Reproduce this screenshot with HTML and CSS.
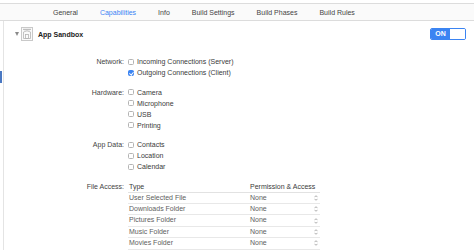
FILE: index.html
```html
<!DOCTYPE html>
<html lang="en">
<head>
  <meta charset="UTF-8">
  <title>Capabilities</title>
  <link rel="stylesheet" href="styles.css">
</head>
<body>
  <div class="tabs">
    <span>General</span>
    <span class="active">Capabilities</span>
    <span>Info</span>
    <span>Build Settings</span>
    <span>Build Phases</span>
    <span>Build Rules</span>
  </div>
  <div class="content">
    <div class="gutter"><div class="mark"></div></div>
    <div class="pane">
      <div class="section-head">
        <span class="disclosure"></span>
        <svg class="cap-icon" width="12" height="14" viewBox="0 0 12 14">
          <rect x="0.5" y="0.5" width="11" height="13" fill="#fafafa" stroke="#c9c9c9"/>
          <path d="M2.5 3 V2 H3.5 V3 H4.5 V2 H5.5 V3 H6.5 V2 H7.5 V3 H8.5 V2 H9.5 V3" fill="none" stroke="#b5b5b5" stroke-width="0.8"/>
          <path d="M2.5 11.5 V5 L6 3.8 L9.5 5 V11.5 Z" fill="none" stroke="#b5b5b5" stroke-width="0.8"/>
          <rect x="4.5" y="7.5" width="3" height="4" fill="none" stroke="#b5b5b5" stroke-width="0.8"/>
        </svg>
        <span class="title">App Sandbox</span>
        <span class="toggle"><span class="on">ON</span><span class="off"></span></span>
      </div>
      <div class="form">
        <div class="label">Network:</div>
        <ul class="opts">
          <li><span class="box"></span>Incoming Connections (Server)</li>
          <li><span class="box checked"></span>Outgoing Connections (Client)</li>
        </ul>
        <div class="label">Hardware:</div>
        <ul class="opts">
          <li><span class="box"></span>Camera</li>
          <li><span class="box"></span>Microphone</li>
          <li><span class="box"></span>USB</li>
          <li><span class="box"></span>Printing</li>
        </ul>
        <div class="label">App Data:</div>
        <ul class="opts">
          <li><span class="box"></span>Contacts</li>
          <li><span class="box"></span>Location</li>
          <li><span class="box"></span>Calendar</li>
        </ul>
        <div class="label">File Access:</div>
        <table class="files">
          <thead>
            <tr><th>Type</th><th colspan="2">Permission &amp; Access</th></tr>
          </thead>
          <tbody>
            <tr><td>User Selected File</td><td>None</td><td class="step"><svg width="4" height="6" viewBox="0 0 4 6"><path d="M0.5 2.2 L2 0.7 L3.5 2.2 M0.5 3.8 L2 5.3 L3.5 3.8" fill="none" stroke="#888" stroke-width="0.7"/></svg></td></tr>
            <tr><td>Downloads Folder</td><td>None</td><td class="step"><svg width="4" height="6" viewBox="0 0 4 6"><path d="M0.5 2.2 L2 0.7 L3.5 2.2 M0.5 3.8 L2 5.3 L3.5 3.8" fill="none" stroke="#888" stroke-width="0.7"/></svg></td></tr>
            <tr><td>Pictures Folder</td><td>None</td><td class="step"><svg width="4" height="6" viewBox="0 0 4 6"><path d="M0.5 2.2 L2 0.7 L3.5 2.2 M0.5 3.8 L2 5.3 L3.5 3.8" fill="none" stroke="#888" stroke-width="0.7"/></svg></td></tr>
            <tr><td>Music Folder</td><td>None</td><td class="step"><svg width="4" height="6" viewBox="0 0 4 6"><path d="M0.5 2.2 L2 0.7 L3.5 2.2 M0.5 3.8 L2 5.3 L3.5 3.8" fill="none" stroke="#888" stroke-width="0.7"/></svg></td></tr>
            <tr><td>Movies Folder</td><td>None</td><td class="step"><svg width="4" height="6" viewBox="0 0 4 6"><path d="M0.5 2.2 L2 0.7 L3.5 2.2 M0.5 3.8 L2 5.3 L3.5 3.8" fill="none" stroke="#888" stroke-width="0.7"/></svg></td></tr>
          </tbody>
        </table>
      </div>
    </div>
  </div>
</body>
</html>
```
FILE: styles.css
```css
* {
  box-sizing: border-box;
}
html, body {
  margin: 0;
  padding: 0;
  background: #ffffff;
  font-family: 'Liberation Sans', Arial, sans-serif;
  font-size: 7px;
  color: #3a3a3a;
  overflow: hidden;
}
.tabs {
  margin-top: 3px;
  height: 18px;
  border-top: 1px solid #dcdcdc;
  border-bottom: 1px solid #dcdcdc;
  background: #fafafa;
  display: flex;
  align-items: center;
  gap: 22px;
  padding-left: 53px;
  color: #444;
}
.tabs .active {
  color: #3a82f4;
}
.content {
  display: flex;
}
.gutter {
  width: 3px;
  flex: none;
}
.mark {
  margin-top: 50px;
  height: 12px;
  width: 2px;
  background: #4a78c2;
}
.pane {
  flex: 1;
  border-left: 1px solid #e4e4e4;
  min-height: 240px;
}
.section-head {
  height: 26px;
  display: flex;
  align-items: center;
  padding-left: 11px;
  padding-right: 8px;
}
.disclosure {
  width: 0;
  height: 0;
  border-left: 2.5px solid transparent;
  border-right: 2.5px solid transparent;
  border-top: 4px solid #8a8a8a;
}
.cap-icon {
  margin-left: 2px;
  display: block;
}
.title {
  margin-left: 5px;
  font-weight: bold;
  color: #222;
}
.toggle {
  margin-left: auto;
  width: 36px;
  height: 12px;
  border: 1px solid #3b84f2;
  border-radius: 2px;
  display: flex;
  overflow: hidden;
}
.toggle .on {
  width: 19px;
  background: #3b84f2;
  color: #fff;
  font-weight: bold;
  font-size: 7px;
  line-height: 10px;
  text-align: center;
}
.toggle .off {
  flex: 1;
  background: #fff;
}
.form {
  display: grid;
  grid-template-columns: 120px 1fr;
  column-gap: 4px;
  row-gap: 8.5px;
  padding-top: 9px;
  line-height: 11px;
}
.label {
  text-align: right;
  color: #444;
}
.opts {
  list-style: none;
  margin: 0;
  padding: 0;
}
.opts li {
  display: flex;
  align-items: center;
  height: 11px;
  color: #3a3a3a;
}
.box {
  width: 6px;
  height: 6px;
  border: 1px solid #b4b4b4;
  border-radius: 1.5px;
  background: #fff;
  margin-right: 3px;
  position: relative;
}
.box.checked {
  background: #3b84f2;
  border-color: #3b84f2;
}
.box.checked::after {
  content: "";
  position: absolute;
  left: 1.2px;
  top: 0;
  width: 1.5px;
  height: 3px;
  border-right: 1px solid #fff;
  border-bottom: 1px solid #fff;
  transform: rotate(40deg);
}
.files {
  width: 192px;
  border-collapse: collapse;
  white-space: nowrap;
  font-size: 7px;
}
.files th {
  text-align: left;
  font-weight: normal;
  color: #3a3a3a;
  height: 11px;
  padding: 0 0 0 1px;
  border-bottom: 1px solid #e2e2e2;
}
.files td {
  height: 11.4px;
  padding: 0 0 0 1px;
  line-height: 10.4px;
  color: #5e5e5e;
  border-bottom: 1px solid #e8e8e8;
}
.files td:first-child,
.files th:first-child {
  width: 121px;
}
.files td.step {
  width: 6px;
  padding: 0;
}
.step svg {
  display: block;
}
```
